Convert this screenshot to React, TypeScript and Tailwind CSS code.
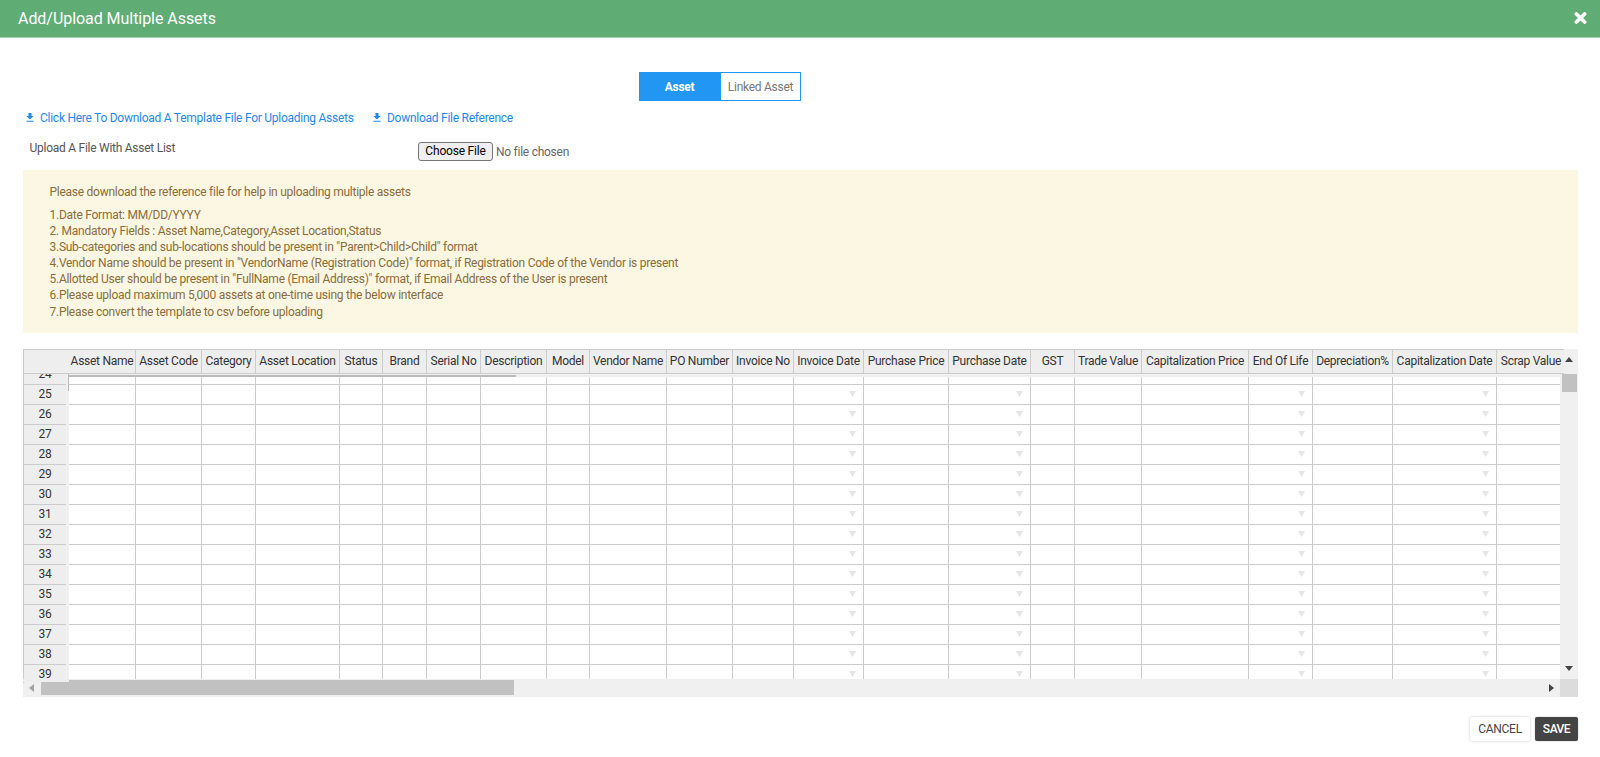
type Column = { label: string; width: number; date?: boolean };

const columns: Column[] = [
  { label: "Asset Name", width: 67 },
  { label: "Asset Code", width: 66 },
  { label: "Category", width: 54 },
  { label: "Asset Location", width: 84 },
  { label: "Status", width: 43 },
  { label: "Brand", width: 44 },
  { label: "Serial No", width: 54 },
  { label: "Description", width: 66 },
  { label: "Model", width: 43 },
  { label: "Vendor Name", width: 77 },
  { label: "PO Number", width: 66 },
  { label: "Invoice No", width: 61 },
  { label: "Invoice Date", width: 70, date: true },
  { label: "Purchase Price", width: 85 },
  { label: "Purchase Date", width: 82, date: true },
  { label: "GST", width: 44 },
  { label: "Trade Value", width: 67 },
  { label: "Capitalization Price", width: 107 },
  { label: "End Of Life", width: 64, date: true },
  { label: "Depreciation%", width: 80 },
  { label: "Capitalization Date", width: 104, date: true },
  { label: "Scrap Value", width: 69 },
];

const rows = Array.from({ length: 16 }, (_, i) => 24 + i);

const notes = [
  "1.Date Format: MM/DD/YYYY",
  "2. Mandatory Fields : Asset Name,Category,Asset Location,Status",
  '3.Sub-categories and sub-locations should be present in "Parent>Child>Child" format',
  '4.Vendor Name should be present in "VendorName (Registration Code)" format, if Registration Code of the Vendor is present',
  '5.Allotted User should be present in "FullName (Email Address)" format, if Email Address of the User is present',
  "6.Please upload maximum 5,000 assets at one-time using the below interface",
  "7.Please convert the template to csv before uploading",
];

function DownloadIcon() {
  return (
    <svg viewBox="0 0 8 9" className="relative -top-px h-[9px] w-2 shrink-0" fill="currentColor">
      <path d="M2.5 0h3v3H7.6L4 6.6.4 3h2.1zM.4 7.7h7.2v1H.4z" />
    </svg>
  );
}

function CloseIcon() {
  return (
    <svg viewBox="0 0 13 12" className="relative -top-px h-3 w-[13px]" fill="none" stroke="currentColor">
      <path d="M2.4 2l8.2 8M10.6 2l-8.2 8" strokeWidth="3.8" strokeLinecap="round" />
    </svg>
  );
}

function Grid() {
  return (
    <div className="relative ml-[23px] mt-4 h-[348px] w-[1555px] overflow-hidden bg-[#f0f0f0] text-[#333]">
      <div className="flex h-[25px] w-[1541px] overflow-hidden border-y border-[#ccc] bg-[#eee]">
        <div className="w-[46px] shrink-0 border-l border-[#ccc]" />
        {columns.map((c) => (
          <div
            key={c.label}
            style={{ width: c.width }}
            className="shrink-0 overflow-hidden border-r border-[#ccc] text-center leading-[23px] whitespace-nowrap"
          >
            {c.label}
          </div>
        ))}
      </div>

      <div className="flex">
        <div className="h-[309px] w-[46px] shrink-0 overflow-hidden bg-[#f0f0f0]">
          <div className="-mt-[9px] w-[43px] border-l border-[#ccc]">
            {rows.map((n) => (
              <div
                key={n}
                className="h-5 border-b border-[#ccc] bg-[#eee] text-center leading-[18px]"
              >
                {n}
              </div>
            ))}
          </div>
        </div>
        <div className="h-[305px] w-[1491px] overflow-hidden bg-white">
          <div className="-mt-[9px]">
            {rows.map((n) => (
              <div key={n} className="flex h-5 border-b border-[#ccc]">
                {columns.map((c) => (
                  <div
                    key={c.label}
                    style={{ width: c.width }}
                    className="flex shrink-0 items-start justify-end border-r border-[#ccc] pt-1.5 pr-[7px]"
                  >
                    {c.date && (
                      <svg viewBox="0 0 7 6" className="h-1.5 w-[7px]" fill="#e6e6e6">
                        <path d="M0 0h7L3.5 6z" />
                      </svg>
                    )}
                  </div>
                ))}
              </div>
            ))}
          </div>
        </div>
      </div>

      <div className="absolute top-[25px] left-[46px] h-[3px] w-[1495px] bg-[#f0f0f0]" />
      <div className="absolute top-[26px] left-[45px] h-[2px] w-[448px] bg-[#bbb]" />
      <div className="absolute top-[25px] left-[45px] h-[17px] w-px bg-[#bbb]" />

      <svg viewBox="0 0 8 5" className="absolute top-2 left-[1542px] h-[5px] w-2" fill="#444">
        <path d="M0 5L4 0l4 5z" />
      </svg>
      <div className="absolute top-[25px] left-[1539px] h-[18px] w-[15px] bg-[#c1c1c1]" />
      <svg viewBox="0 0 8 5" className="absolute top-[317px] left-[1542px] h-[5px] w-2" fill="#444">
        <path d="M0 0h8L4 5z" />
      </svg>
      <div className="absolute top-[331px] left-[18px] h-[15px] w-[473px] bg-[#c1c1c1]" />
      <div className="absolute top-[330px] left-0 h-[3px] w-[46px] bg-[#eee]" />
      <svg viewBox="0 0 5 8" className="absolute top-[335px] left-[6px] h-2 w-[5px]" fill="#a3a3a3">
        <path d="M5 0v8L0 4z" />
      </svg>
      <svg viewBox="0 0 5 8" className="absolute top-[335px] left-[1526px] h-2 w-[5px]" fill="#444">
        <path d="M0 0v8l5-4z" />
      </svg>
      <div className="absolute right-0 bottom-0 h-[18px] w-[18px] bg-[#dcdcdc]" />
    </div>
  );
}

export default function App() {
  return (
    <div className="h-[757px] w-[1600px] overflow-hidden bg-white font-['Roboto',sans-serif] text-[12px] tracking-[-0.26px]">
      <header className="flex h-[38px] items-center justify-between border-b border-[#a9d2b5] bg-[#5fac75] pr-[13px] pl-[18px] text-white">
        <h1 className="text-[16px] leading-[36px] tracking-[-0.05px]">Add/Upload Multiple Assets</h1>
        <CloseIcon />
      </header>

      <div className="mt-[34px] ml-[639px] flex h-[29px] w-[162px] border border-[#2196f3] text-center leading-[28px]">
        <div className="w-[81px] bg-[#2196f3] pr-[2px] font-bold text-white">Asset</div>
        <div className="flex-1 text-[#777]">Linked Asset</div>
      </div>

      <div className="mt-2 flex h-[18px] items-center pl-[26px] text-[#1e88f0]">
        <a className="flex w-[347px] items-center gap-[6px] whitespace-nowrap">
          <DownloadIcon />
          Click Here To Download A Template File For Uploading Assets
        </a>
        <a className="flex items-center gap-[6px] whitespace-nowrap">
          <DownloadIcon />
          Download File Reference
        </a>
      </div>

      <div className="mt-[11px] flex h-[32px] pl-[29.5px] text-[#555]">
        <div className="w-[388.5px] leading-[20px]">Upload A File With Asset List</div>
        <div className="mt-1 flex h-[19px] items-center text-[#666]">
          <button className="mr-[3px] h-[19px] w-[75px] rounded-[3px] border border-[#767676] bg-[#efefef] tracking-[-0.2px] leading-[17px] text-black">
            Choose File
          </button>
          No file chosen
        </div>
      </div>

      <div className="ml-[23px] h-[163px] w-[1555px] bg-[#fcf7e2] pt-[14px] pl-[26.5px] leading-4 text-[#8a6d3b]">
        <p className="mb-[7px]">Please download the reference file for help in uploading multiple assets</p>
        {notes.map((n) => (
          <p key={n} className="h-[16.1px] whitespace-nowrap">
            {n}
          </p>
        ))}
      </div>

      <Grid />

      <footer className="mt-[20px] flex h-[26px] justify-end gap-[5px] pr-[22px]">
        <button className="h-[24px] w-[60px] rounded-[2px] bg-white leading-[25px] text-[#444] shadow-[0_0_3px_rgba(0,0,0,0.2)]">
          CANCEL
        </button>
        <button className="h-[24px] w-[43px] rounded-[2px] bg-[#444] leading-[25px] font-medium tracking-[-0.5px] text-white shadow-[0_0_2px_rgba(0,0,0,0.25)]">
          SAVE
        </button>
      </footer>
    </div>
  );
}
